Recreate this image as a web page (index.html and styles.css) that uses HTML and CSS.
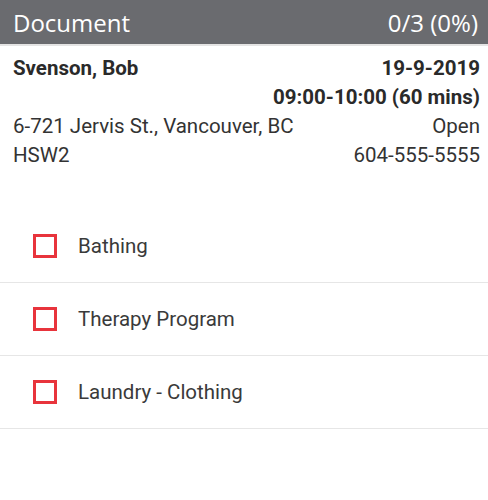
FILE: index.html
```html
<!DOCTYPE html>
<html lang="en">
<head>
    <meta charset="UTF-8">
    <meta name="viewport" content="width=device-width, initial-scale=1.0">
    <title>Document</title>
    <link rel="stylesheet" href="styles.css">
</head>
<body>
    <div class="header">
        <span class="title">Document</span>
        <span class="progress">0/3 (0%)</span>
    </div>

    <div class="visit">
        <div class="row bold">
            <span>Svenson, Bob</span>
            <span>19-9-2019</span>
        </div>
        <div class="row bold">
            <span></span>
            <span>09:00-10:00 (60 mins)</span>
        </div>
        <div class="row">
            <span>6-721 Jervis St., Vancouver, BC</span>
            <span>Open</span>
        </div>
        <div class="row">
            <span>HSW2</span>
            <span>604-555-5555</span>
        </div>
    </div>

    <ul class="tasks">
        <li class="task"><span class="check"></span><span class="task-name">Bathing</span></li>
        <li class="task"><span class="check"></span><span class="task-name">Therapy Program</span></li>
        <li class="task"><span class="check"></span><span class="task-name">Laundry - Clothing</span></li>
    </ul>
</body>
</html>
```
FILE: styles.css
```css
body {
    margin: 0;
    background-color: #fff;
    font-family: Roboto, "Liberation Sans", sans-serif;
    color: #333;
}
.header {
    display: flex;
    justify-content: space-between;
    align-items: center;
    height: 44px;
    padding: 0 10px 0 13px;
    background-color: #6a6b6f;
    border-bottom: 2px solid #e4e4e4;
    font-family: "Open Sans", sans-serif;
    font-size: 24px;
    color: #fff;
}
.visit {
    padding: 8px 8px 0 13px;
}
.row {
    display: flex;
    justify-content: space-between;
    font-size: 20.5px;
    line-height: 29px;
    color: #333;
}
.bold {
    font-weight: bold;
    color: #2a2a2a;
}
.tasks {
    list-style: none;
    margin: 40px 0 0 0;
    padding: 0;
}
.task {
    display: flex;
    align-items: center;
    height: 72px;
    border-bottom: 1px solid #e6e6e6;
    padding-left: 33px;
}
.check {
    width: 18px;
    height: 18px;
    border: 3px solid #e8343c;
    margin-right: 21px;
}
.task-name {
    font-size: 20.5px;
    color: #3a3a3a;
}
```
